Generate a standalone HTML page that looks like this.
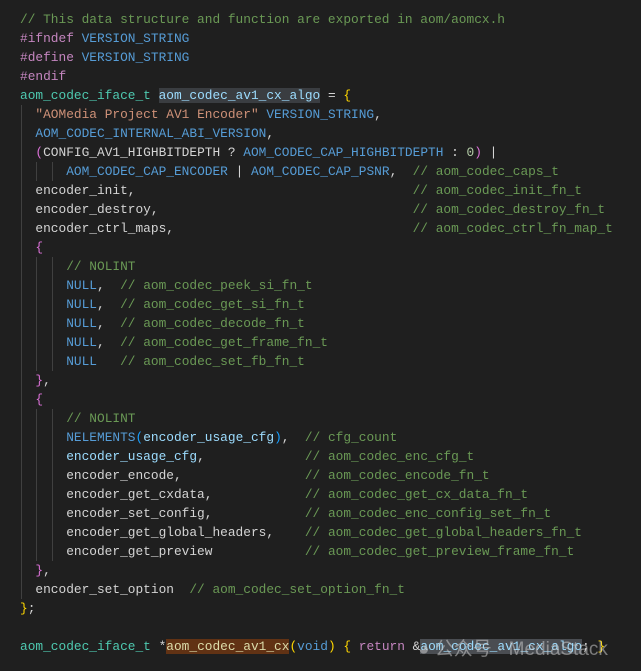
<!DOCTYPE html>
<html><head><meta charset="utf-8"><style>
html,body{margin:0;padding:0;background:#1f1f1f;width:641px;height:671px;overflow:hidden}
#c{position:absolute;left:20px;top:10px;font-family:"Liberation Mono",monospace;font-size:12.83px;color:#d4d4d4}
.l{height:19px;line-height:19px;white-space:pre}
.c{color:#6a9955}.p{color:#c586c0}.m{color:#569cd6}.t{color:#4ec9b0}.v{color:#9cdcfe}.s{color:#ce9178}
.y{color:#ffd700}.o{color:#da70d6}.b{color:#179fff}.n{color:#b5cea8}.f{color:#dcdcaa}
.g{position:absolute;width:1px;background:#404040}
.hl{background:#3a3d41}.hb{background:#613214}
</style></head><body>
<div class="g" style="left:21px;top:105px;height:494px"></div>
<div class="g" style="left:36px;top:162px;height:19px"></div>
<div class="g" style="left:52px;top:162px;height:19px"></div>
<div class="g" style="left:36px;top:257px;height:114px"></div>
<div class="g" style="left:52px;top:257px;height:114px"></div>
<div class="g" style="left:36px;top:409px;height:152px"></div>
<div class="g" style="left:52px;top:409px;height:152px"></div>
<div id="c">
<div class="l"><span class="c">// This data structure and function are exported in aom/aomcx.h</span></div>
<div class="l"><span class="p">#ifndef</span> <span class="m">VERSION_STRING</span></div>
<div class="l"><span class="p">#define</span> <span class="m">VERSION_STRING</span></div>
<div class="l"><span class="p">#endif</span></div>
<div class="l"><span class="t">aom_codec_iface_t</span> <span class="v hl">aom_codec_av1_cx_algo</span> = <span class="y">{</span></div>
<div class="l">  <span class="s">"AOMedia Project AV1 Encoder"</span> <span class="m">VERSION_STRING</span>,</div>
<div class="l">  <span class="m">AOM_CODEC_INTERNAL_ABI_VERSION</span>,</div>
<div class="l">  <span class="o">(</span>CONFIG_AV1_HIGHBITDEPTH ? <span class="m">AOM_CODEC_CAP_HIGHBITDEPTH</span> : <span class="n">0</span><span class="o">)</span> |</div>
<div class="l">      <span class="m">AOM_CODEC_CAP_ENCODER</span> | <span class="m">AOM_CODEC_CAP_PSNR</span>,  <span class="c">// aom_codec_caps_t</span></div>
<div class="l">  encoder_init,                                    <span class="c">// aom_codec_init_fn_t</span></div>
<div class="l">  encoder_destroy,                                 <span class="c">// aom_codec_destroy_fn_t</span></div>
<div class="l">  encoder_ctrl_maps,                               <span class="c">// aom_codec_ctrl_fn_map_t</span></div>
<div class="l">  <span class="o">{</span></div>
<div class="l">      <span class="c">// NOLINT</span></div>
<div class="l">      <span class="m">NULL</span>,  <span class="c">// aom_codec_peek_si_fn_t</span></div>
<div class="l">      <span class="m">NULL</span>,  <span class="c">// aom_codec_get_si_fn_t</span></div>
<div class="l">      <span class="m">NULL</span>,  <span class="c">// aom_codec_decode_fn_t</span></div>
<div class="l">      <span class="m">NULL</span>,  <span class="c">// aom_codec_get_frame_fn_t</span></div>
<div class="l">      <span class="m">NULL</span>   <span class="c">// aom_codec_set_fb_fn_t</span></div>
<div class="l">  <span class="o">}</span>,</div>
<div class="l">  <span class="o">{</span></div>
<div class="l">      <span class="c">// NOLINT</span></div>
<div class="l">      <span class="m">NELEMENTS</span><span class="b">(</span><span class="v">encoder_usage_cfg</span><span class="b">)</span>,  <span class="c">// cfg_count</span></div>
<div class="l">      <span class="v">encoder_usage_cfg</span>,             <span class="c">// aom_codec_enc_cfg_t</span></div>
<div class="l">      encoder_encode,                <span class="c">// aom_codec_encode_fn_t</span></div>
<div class="l">      encoder_get_cxdata,            <span class="c">// aom_codec_get_cx_data_fn_t</span></div>
<div class="l">      encoder_set_config,            <span class="c">// aom_codec_enc_config_set_fn_t</span></div>
<div class="l">      encoder_get_global_headers,    <span class="c">// aom_codec_get_global_headers_fn_t</span></div>
<div class="l">      encoder_get_preview            <span class="c">// aom_codec_get_preview_frame_fn_t</span></div>
<div class="l">  <span class="o">}</span>,</div>
<div class="l">  encoder_set_option  <span class="c">// aom_codec_set_option_fn_t</span></div>
<div class="l"><span class="y">}</span>;</div>
<div class="l"> </div>
<div class="l"><span class="t">aom_codec_iface_t</span> *<span class="f hb">aom_codec_av1_cx</span><span class="y">(</span><span class="m">void</span><span class="y">)</span> <span class="y">{</span> <span class="p">return</span> &amp;<span class="v" style="background:#4a4d52">aom_codec_av1_cx_algo</span>; <span class="y">}</span></div>
</div>
<div style="position:absolute;left:418px;top:634px;font-family:'Liberation Sans','Noto Sans CJK SC',sans-serif;font-size:19px;color:rgba(200,200,200,0.55);white-space:pre">◕ 公众号 · MediaStack</div>
</body></html>
